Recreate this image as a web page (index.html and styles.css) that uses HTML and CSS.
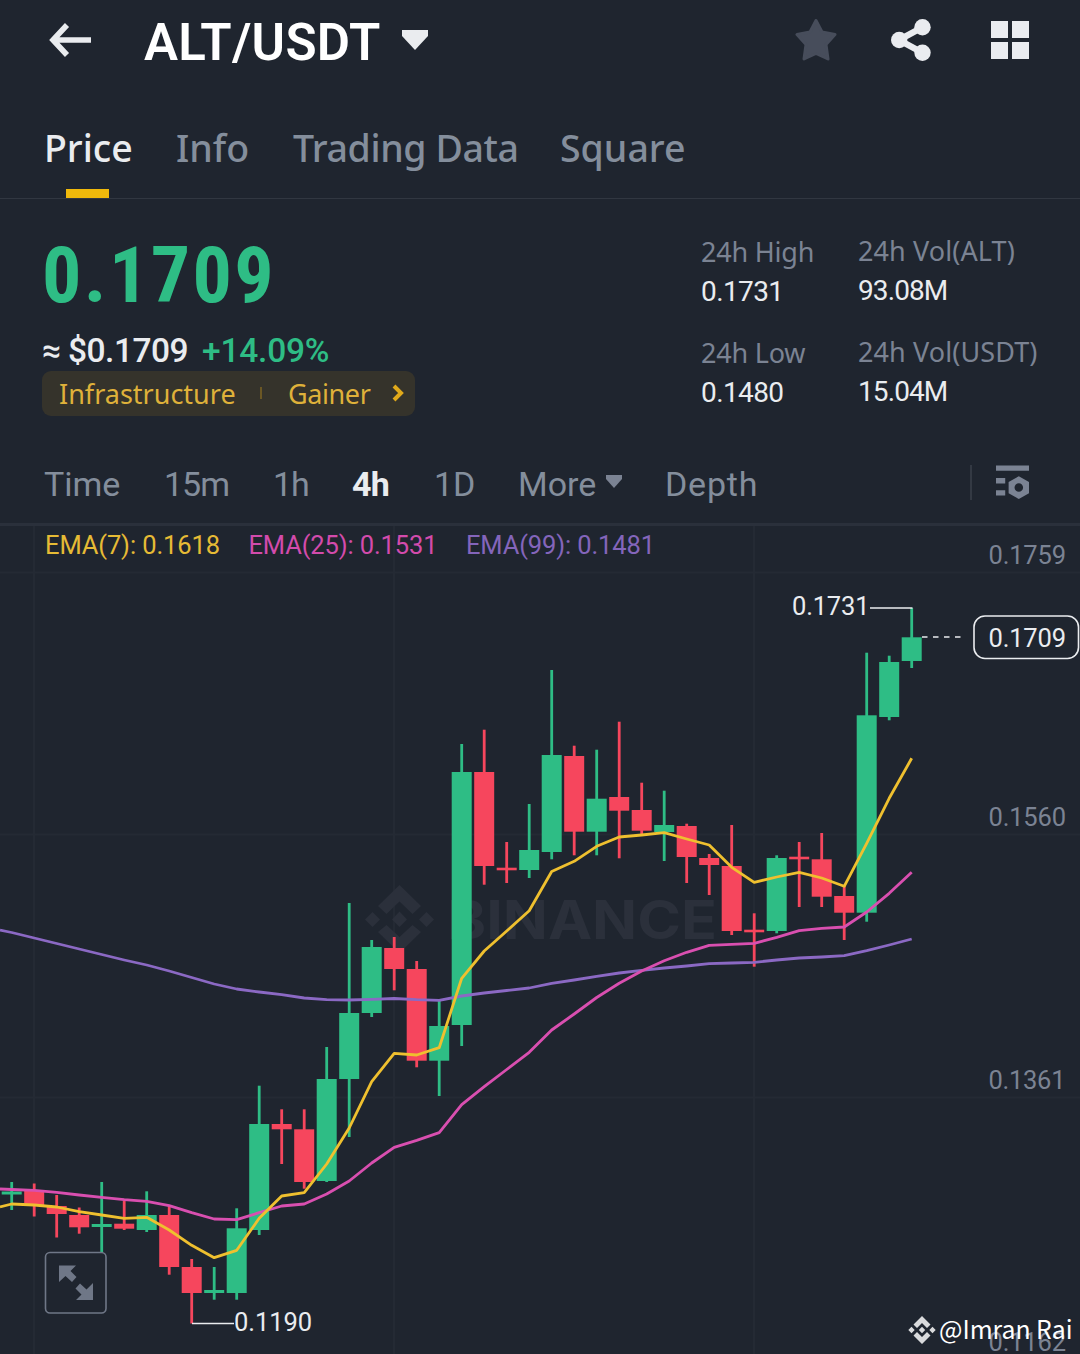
FILE: index.html
```html
<!DOCTYPE html>
<html lang="en">
<head>
  <meta charset="UTF-8">
  <title>ALT/USDT</title>
  <link rel="stylesheet" href="styles.css">
</head>
<body>

<header class="topbar">
  <svg class="back" width="42" height="34" viewBox="0 0 42 34">
    <path d="M18 2 L4 17 L18 32 M4 17 H42" fill="none" stroke="#eaecef" stroke-width="5.6"/>
  </svg>
  <h1>ALT/USDT</h1>
  <svg class="caret" width="26" height="20" viewBox="0 0 26 20">
    <path d="M0 0 H26 V6 L13 20 L0 6 Z" fill="#eaecef"/>
  </svg>
  <div class="actions">
    <svg width="42" height="42" viewBox="0 0 42 42">
      <path d="M21 1.500 L27 13 L40 15.500 L31 25.500 L33 40 L21 34.500 L9 40 L11 25.500 L2 15.500 L15 13 Z" fill="#474d5b" stroke="#474d5b" stroke-width="3" stroke-linejoin="round"/>
    </svg>
    <svg class="share" width="40" height="42" viewBox="0 0 40 42">
      <path d="M32 8 L8 21 L32 34" fill="none" stroke="#eaecf0" stroke-width="6.500"/>
      <circle cx="31.500" cy="8.200" r="8.200" fill="#eaecf0"/>
      <circle cx="8.200" cy="21" r="8.200" fill="#eaecf0"/>
      <circle cx="31.500" cy="33.800" r="8.200" fill="#eaecf0"/>
    </svg>
    <svg width="38" height="38" viewBox="0 0 38 38">
      <path d="M0 0H17V17H0Z M21 0H38V17H21Z M0 21H17V38H0Z M21 21H38V38H21Z" fill="#eaecf0"/>
    </svg>
  </div>
</header>

<nav class="tabs">
  <a class="active">Price</a>
  <a class="info">Info</a>
  <a class="trading">Trading Data</a>
  <a class="square">Square</a>
</nav>

<section class="summary">
  <div class="price-box">
    <div class="price">0.1709</div>
    <div class="sub-price">
      <span class="approx">≈</span>
      <span class="usd">$0.1709</span>
      <span class="change">+14.09%</span>
    </div>
    <div class="tags">
      <span class="tag-infra">Infrastructure</span>
      <i></i>
      <span class="tag-gainer">Gainer</span>
      <svg width="12" height="18" viewBox="0 0 12 18">
        <path d="M2 2 L9 9 L2 16" fill="none" stroke="#e0a91b" stroke-width="4"/>
      </svg>
    </div>
  </div>
  <div class="stats">
    <div class="stat">
      <label>24h High</label>
      <b>0.1731</b>
    </div>
    <div class="stat">
      <label>24h Low</label>
      <b>0.1480</b>
    </div>
  </div>
  <div class="stats volume">
    <div class="stat">
      <label>24h Vol(ALT)</label>
      <b>93.08M</b>
    </div>
    <div class="stat">
      <label>24h Vol(USDT)</label>
      <b>15.04M</b>
    </div>
  </div>
</section>

<nav class="intervals">
  <a class="time">Time</a>
  <a class="m15">15m</a>
  <a class="h1">1h</a>
  <a class="h4 active">4h</a>
  <a class="d1">1D</a>
  <a class="more">More</a>
  <svg class="more-caret" width="16" height="13" viewBox="0 0 16 13">
    <path d="M0 0 H16 V4 L8 13 L0 4 Z" fill="#7b8393"/>
  </svg>
  <a class="depth">Depth</a>
  <div class="settings">
    <svg width="33" height="34" viewBox="0 0 34 34" fill="#7b8393">
      <path d="M0 0H34V5.500H0Z M0 13H9.500V18.500H0Z M0 25.500H9.500V31H0Z"/>
      <path fill-rule="evenodd" d="M23.500 11 L34 17 V28.500 L23.500 34.500 L13 28.500 V17 Z M23.500 18.300 A4.400 4.400 0 1 0 23.500 27.100 A4.400 4.400 0 1 0 23.500 18.300 Z"/>
    </svg>
  </div>
</nav>

<!-- chart units are page pixels, so the viewBox starts at y 526 -->
<svg class="chart" viewBox="0 526 1080 828" width="1080" height="828">
  <path class="grid" d="M34 526V1354 M394 526V1354 M754 526V1354 M0 572.500H1080 M0 834.500H1080 M0 1097.500H1080"/>

  <g class="logo">
    <path d="M399.500 885 L421 906 L412.500 914 L399.500 901.500 L386.500 914 L378 906 Z"/>
    <path d="M399.500 953 L421 932 L412.500 925 L399.500 937 L386.500 925 L378 932 Z"/>
    <path d="M399.500 911.500 L407 919.500 L399.500 927 L392 919.500 Z M372.500 912 L380 919.500 L372.500 927 L365 919.500 Z M426.500 912 L434 919.500 L426.500 927 L419 919.500 Z"/>
    <text x="447" y="938.500" textLength="270" lengthAdjust="spacingAndGlyphs">BINANCE</text>
  </g>

  <g id="candles"></g>
  <polyline id="ema99" class="line purple"/>
  <polyline id="ema25" class="line pink"/>
  <polyline id="ema7" class="line yellow"/>

  <text class="ema yellow" x="45" y="554" textLength="175">EMA(7): 0.1618</text>
  <text class="ema pink" x="248.500" y="554" textLength="189">EMA(25): 0.1531</text>
  <text class="ema purple" x="466" y="554" textLength="189">EMA(99): 0.1481</text>

  <text class="axis" x="988.500" y="564" textLength="77.500">0.1759</text>
  <text class="axis" x="988.500" y="826" textLength="77.500">0.1560</text>
  <text class="axis" x="988.500" y="1089" textLength="77">0.1361</text>
  <text class="axis" x="988.500" y="1351" textLength="77.500">0.1162</text>

  <path class="mark" d="M870 608H912.500 M192 1323.500H234"/>
  <text class="label" x="792" y="615" textLength="77.500">0.1731</text>
  <text class="label" x="234" y="1331" textLength="78">0.1190</text>

  <path class="mark dashed" d="M922 637H962"/>
  <rect class="last" x="974" y="616" width="104.500" height="42.500" rx="11"/>
  <text class="label" x="988.500" y="647" textLength="77.500">0.1709</text>

  <g class="expand">
    <rect x="45.500" y="1252.500" width="60.500" height="60.500" rx="4.500"/>
    <path d="M59 1265.500 H76 L70.500 1271 L76.500 1277 L72 1282 L65.500 1276 L59 1282 Z"/>
    <path d="M93 1300 H76 L81.500 1294.500 L75.500 1288.500 L80 1283.500 L86.500 1289.500 L93 1283 Z"/>
  </g>

  <g class="author">
    <path d="M922 1316 L930.500 1324.500 L927 1328 L922 1323 L917 1328 L913.500 1324.500 Z"/>
    <path d="M922 1344 L930.500 1335.500 L927 1332 L922 1337 L917 1332 L913.500 1335.500 Z"/>
    <path d="M922 1326.800 L925.200 1330 L922 1333.200 L918.800 1330 Z M911.500 1326.800 L914.700 1330 L911.500 1333.200 L908.300 1330 Z M932.500 1326.800 L935.700 1330 L932.500 1333.200 L929.300 1330 Z"/>
    <text x="939" y="1339" textLength="133.500" lengthAdjust="spacingAndGlyphs">@Imran Rai</text>
  </g>
</svg>

<script src="script.js"></script>
</body>
</html>
```

FILE: styles.css
```css
* {
  box-sizing: border-box;
}
body {
  margin: 0;
  width: 1080px;
  height: 1354px;
  overflow: hidden;
  background-color: #1f252f;
  color: #eaecef;
  font-family: Roboto, sans-serif;
}
svg {
  display: block;
  flex: none;
}
a, span, label, b, h1 {
  white-space: nowrap;
}

/* top bar */
.topbar {
  display: flex;
  align-items: center;
  height: 82px;
  padding: 0 51px 2px 49px;
}
.topbar h1 {
  width: 258px;
  margin: 6px 0 0 53px;
  font-size: 51px;
  font-weight: 600;
  letter-spacing: .3px;
  line-height: 60px;
  color: #fff;
}
.actions {
  display: flex;
  align-items: center;
  gap: 57px;
  margin-left: auto;
}
.share {
  margin: 0 3px 0 -3px;
}

/* tabs */
.tabs {
  display: flex;
  height: 117px;
  padding: 40px 0 0 44px;
  border-bottom: 1px solid #313741;
  font-family: "Noto Sans", sans-serif;
  font-size: 37.5px;
  font-weight: 500;
  line-height: 52px;
  color: #848e9c;
}
.tabs a {
  width: 132px;
}
.tabs .active {
  position: relative;
  color: #eaecef;
}
.tabs .active::after {
  content: "";
  position: absolute;
  left: 22px;
  bottom: 0;
  width: 43px;
  height: 9px;
  background-color: #f0b90b;
}
.tabs .info {
  width: 117px;
}
.tabs .trading {
  width: 267px;
  letter-spacing: -.4px;
}

/* price summary */
.summary {
  display: flex;
  height: 245px;
  padding: 33px 0 0 42px;
}
.price-box {
  width: 659px;
}
.price {
  height: 93px;
  font-size: 78px;
  font-weight: 700;
  font-stretch: 75%;
  line-height: 88px;
  letter-spacing: 2.4px;
  color: #2ebd85;
}
.sub-price {
  display: flex;
  height: 46px;
  font-size: 33.5px;
  font-weight: 500;
  letter-spacing: -.5px;
  line-height: 52px;
}
.approx {
  width: 26px;
}
.usd {
  width: 134px;
}
.change {
  letter-spacing: -.2px;
  color: #2ebd85;
}
.tags {
  display: flex;
  align-items: center;
  width: 373px;
  height: 45px;
  padding: 0 0 1px 17px;
  border-radius: 9px;
  background-color: #35332b;
  font-family: "Noto Sans", sans-serif;
  font-size: 27px;
  color: #dfb13a;
}
.tag-infra {
  width: 201px;
}
.tags i {
  width: 2px;
  height: 12px;
  background-color: #6b5724;
}
.tag-gainer {
  width: 105px;
  padding-left: 26px;
  margin-right: 25px;
  letter-spacing: -.4px;
}
.stats {
  width: 157px;
}
.volume {
  margin-top: -1.5px;
}
.stat {
  height: 101px;
}
.stat label, .stat b {
  display: block;
  height: 39px;
  font-size: 28px;
  line-height: 42px;
  font-weight: 400;
}
.stat b {
  letter-spacing: -.6px;
}
.stat label {
  font-family: "Noto Sans", sans-serif;
  font-size: 27px;
  line-height: 40px;
  letter-spacing: -.2px;
  color: #7b8393;
}
.volume label {
  letter-spacing: .1px;
}
.volume .stat b {
  letter-spacing: -.9px;
}

/* chart intervals */
.intervals {
  display: flex;
  height: 82px;
  padding: 21px 51px 0 44px;
  border-bottom: 3px solid #2a303b;
  font-size: 34px;
  line-height: 39px;
  color: #848e9c;
}
.intervals .time { width: 120px; }
.intervals .m15 {
  width: 109px;
  letter-spacing: -1px;
}
.intervals .h1 {
  width: 79px;
  letter-spacing: -1px;
}
.intervals .h4 { width: 82px; }
.intervals .d1 { width: 84px; }
.intervals .more { width: 88px; }
.intervals .depth {
  letter-spacing: .8px;
}
.intervals .active {
  font-weight: 700;
  letter-spacing: -.8px;
  color: #eaecef;
}
.more-caret {
  margin: 10px 43px 0 0;
}
.settings {
  height: 35px;
  padding-left: 24px;
  margin-left: auto;
  border-left: 2px solid #333943;
}

/* chart */
.chart text {
  font-family: Roboto, sans-serif;
  font-size: 25.5px;
}
.grid {
  stroke: #242a34;
  stroke-width: 2;
}
.chart .logo {
  fill: #2b303b;
}
.chart .logo text {
  font-family: Inter, sans-serif;
  font-size: 53px;
  font-weight: 700;
}
.up {
  fill: #2ebd85;
}
.down {
  fill: #f6465d;
}
.line {
  fill: none;
  stroke-width: 2.8;
  stroke-linejoin: round;
}
.line.yellow { stroke: #efc02f; }
.line.pink { stroke: #d94fb0; }
.line.purple { stroke: #8b69c4; }
.ema.yellow { fill: #e6bb35; }
.ema.pink { fill: #d34bac; }
.ema.purple { fill: #8465bb; }
.axis {
  fill: #7b8393;
}
.label {
  fill: #eaecef;
}
.mark, .last {
  fill: none;
  stroke: #eaecef;
  stroke-width: 1.6;
}
.dashed {
  stroke-dasharray: 5.5 5.5;
}
.expand rect {
  fill: #1f252f;
  stroke: #6f7787;
  stroke-width: 1.6;
}
.expand path {
  fill: #6f7787;
}
.author {
  fill: #d9dadc;
}
.chart .author text {
  font-family: "Noto Sans CJK SC", sans-serif;
  font-size: 25px;
  fill: #fff;
}
```

FILE: script.js
```js
// [high, body top, body bottom, low, direction], one entry per 4h candle
const candles = [
  [1182, 1191.5, 1194.5, 1210, 1],
  [1183.5, 1190, 1205.5, 1216.5, 0],
  [1195, 1206, 1214, 1237.5, 0],
  [1207.5, 1215, 1227.3, 1233.7, 0],
  [1182, 1224, 1227, 1256, 1],
  [1200.6, 1223.7, 1228.7, 1230, 0],
  [1191.3, 1215, 1230, 1232, 1],
  [1206, 1215, 1267, 1274.7, 0],
  [1259, 1267, 1293, 1323.5, 0],
  [1267, 1290, 1293, 1299.7, 1],
  [1208.3, 1228.3, 1293, 1299.7, 1],
  [1085.7, 1124, 1230, 1235, 1],
  [1109.3, 1124, 1129.3, 1164, 0],
  [1109.3, 1129.3, 1182, 1188.7, 0],
  [1047, 1079, 1181, 1182, 1],
  [903, 1013, 1079, 1137, 1],
  [940, 947, 1013, 1017, 1],
  [937, 948, 969, 990.3, 0],
  [961, 969, 1060.7, 1067.3, 0],
  [1000, 1026, 1060.7, 1096, 1],
  [744, 772, 1025, 1046, 1],
  [729.7, 772, 866, 884.7, 0],
  [842, 867.7, 870.3, 883, 0],
  [804, 850, 870, 878, 1],
  [670, 755, 852, 859.3, 1],
  [745.7, 756, 831.7, 855.3, 0],
  [749.7, 798.7, 831.7, 855.3, 1],
  [721.7, 797, 810.7, 858.3, 0],
  [782.7, 810, 830.7, 834.3, 0],
  [790.7, 825, 832, 861, 1],
  [823.7, 826, 857, 883, 0],
  [854, 858, 865, 895, 0],
  [825, 866, 931, 935, 0],
  [913.3, 929.7, 932.3, 966.7, 0],
  [855.3, 858, 931, 933.3, 1],
  [842, 856.7, 859.3, 907, 0],
  [833, 859.3, 896.7, 907, 0],
  [885, 896, 912.7, 940, 0],
  [652.7, 715.3, 912.7, 921.7, 1],
  [655.7, 662, 717, 720.3, 1],
  [608, 637.3, 661, 668, 1]
];

const ema7 = [1204, 1205, 1207, 1211.7, 1215, 1218.3, 1217.3, 1230, 1245.3, 1257.7, 1250.3,
  1218.3, 1196, 1192.7, 1164, 1128, 1081.7, 1053.3, 1055, 1047.7, 978.3, 951, 931, 910.7,
  871.5, 861.3, 846.3, 837, 835, 832.7, 839, 845, 867.3, 882.3, 877, 872.3, 878, 886.3,
  843.3, 798.3, 758.3];
const ema25 = [1189.5, 1190.3, 1192.3, 1195, 1197.3, 1199.7, 1201.3, 1205.7, 1212.7, 1219,
  1219.7, 1212.7, 1206, 1204, 1194, 1181, 1163, 1147.3, 1140.3, 1132.7, 1104.7, 1086.7,
  1069.5, 1052.3, 1030, 1014, 997.5, 983.3, 971, 960.7, 952.3, 945.3, 944.3, 943.3, 937.3,
  930.7, 928.3, 927, 912, 893.3, 872.3];
const ema99 = [932.5, 938, 943.5, 949, 954.5, 960, 965, 971, 977.5, 984, 989, 992, 994.7, 998,
  999.7, 1000, 999.3, 998.5, 999.7, 1000.3, 996, 993, 990.5, 988, 983.3, 980, 976.3, 973,
  970.3, 968, 966, 963.7, 963, 962.3, 960, 958, 957, 955.7, 950.7, 945, 939];

const step = 22.5;
const firstX = 11.7;

function rect(x, y, w, h, cls) {
  return `<rect class="${cls}" x="${x}" y="${y}" width="${w}" height="${h}"/>`;
}

document.getElementById("candles").innerHTML = candles.map(([high, top, bottom, low, up], i) => {
  const x = firstX + i * step;
  const cls = up ? "up" : "down";
  return rect(x - 1.4, high, 2.8, low - high, cls) + rect(x - 10, top, 20, bottom - top, cls);
}).join("");

function drawLine(id, values, startY) {
  const points = values.map((y, i) => `${firstX + i * step},${y}`);
  document.getElementById(id).setAttribute("points", `0,${startY} ` + points.join(" "));
}

drawLine("ema7", ema7, 1207);
drawLine("ema25", ema25, 1189);
drawLine("ema99", ema99, 930);
```
